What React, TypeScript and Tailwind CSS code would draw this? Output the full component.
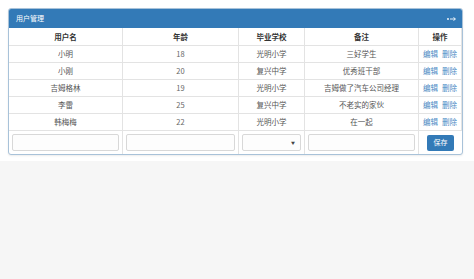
import React from "react";

const USERS = [
  { name: "小明", age: 18, school: "光明小学", note: "三好学生" },
  { name: "小刚", age: 20, school: "复兴中学", note: "优秀班干部" },
  { name: "吉姆格林", age: 19, school: "光明小学", note: "吉姆做了汽车公司经理" },
  { name: "李雷", age: 25, school: "复兴中学", note: "不老实的家伙" },
  { name: "韩梅梅", age: 22, school: "光明小学", note: "在一起" },
];

const cell = "border-r border-[#e3e3e3] last:border-r-0 text-center";

export default function App() {
  return (
    <div className="min-h-[279px] bg-[#f6f6f6] font-['Noto_Sans_CJK_SC',sans-serif]">
      <div className="bg-white px-2 pt-2 pb-[6px]">
        <div className="w-[455px] rounded-[3px] border border-[#a8c2d9] bg-white shadow-[0_1px_2px_rgba(0,0,0,0.08)]">
          {/* Heading */}
          <div className="h-[19px] bg-[#337ab7] rounded-t-[2px] flex items-center justify-between pl-[7px] pr-[5px]">
            <span className="text-[7px] text-white">用户管理</span>
            <svg width="10" height="6" viewBox="0 0 10 6" className="text-white">
              <circle cx="1" cy="3" r="0.9" fill="currentColor" />
              <path d="M3 3h5M6.5 1.5L8.5 3L6.5 4.5" stroke="currentColor" strokeWidth="0.9" fill="none" />
            </svg>
          </div>

          {/* Table */}
          <div className="grid grid-cols-[114px_116px_66px_114px_43px] text-[7.5px] text-[#555]">
            <div className={`${cell} h-[17px] flex items-center justify-center font-bold text-[#333]`}>用户名</div>
            <div className={`${cell} h-[17px] flex items-center justify-center font-bold text-[#333]`}>年龄</div>
            <div className={`${cell} h-[17px] flex items-center justify-center font-bold text-[#333]`}>毕业学校</div>
            <div className={`${cell} h-[17px] flex items-center justify-center font-bold text-[#333]`}>备注</div>
            <div className={`${cell} h-[17px] flex items-center justify-center font-bold text-[#333]`}>操作</div>

            {USERS.map((u) => (
              <React.Fragment key={u.name}>
                <div className={`${cell} h-[17px] flex items-center justify-center border-t`}>{u.name}</div>
                <div className={`${cell} h-[17px] flex items-center justify-center border-t text-[#666]`}>{u.age}</div>
                <div className={`${cell} h-[17px] flex items-center justify-center border-t`}>{u.school}</div>
                <div className={`${cell} h-[17px] flex items-center justify-center border-t`}>{u.note}</div>
                <div className={`${cell} h-[17px] flex items-center justify-center gap-[4px] border-t text-[#4a8ac4]`}>
                  <span>编辑</span>
                  <span>删除</span>
                </div>
              </React.Fragment>
            ))}

            {/* Form row */}
            <div className={`${cell} h-[24px] flex items-center px-[3px] border-t`}>
              <div className="w-full h-[17px] rounded-[2px] border border-[#d8d8d8] bg-[#fdfdfd]" />
            </div>
            <div className={`${cell} h-[24px] flex items-center px-[3px] border-t`}>
              <div className="w-full h-[17px] rounded-[2px] border border-[#d8d8d8] bg-[#fdfdfd]" />
            </div>
            <div className={`${cell} h-[24px] flex items-center px-[3px] border-t`}>
              <div className="w-full h-[17px] rounded-[2px] border border-[#d8d8d8] bg-[#fdfdfd] flex items-center justify-end pr-[5px]">
                <span className="text-[4px] text-[#444]">▼</span>
              </div>
            </div>
            <div className={`${cell} h-[24px] flex items-center px-[3px] border-t`}>
              <div className="w-full h-[17px] rounded-[2px] border border-[#d8d8d8] bg-[#fdfdfd]" />
            </div>
            <div className={`${cell} h-[24px] flex items-center justify-center border-t`}>
              <div className="w-[27px] h-[16px] rounded-[2px] bg-[#337ab7] text-white text-[7px] flex items-center justify-center">
                保存
              </div>
            </div>
          </div>
        </div>
      </div>
    </div>
  );
}
